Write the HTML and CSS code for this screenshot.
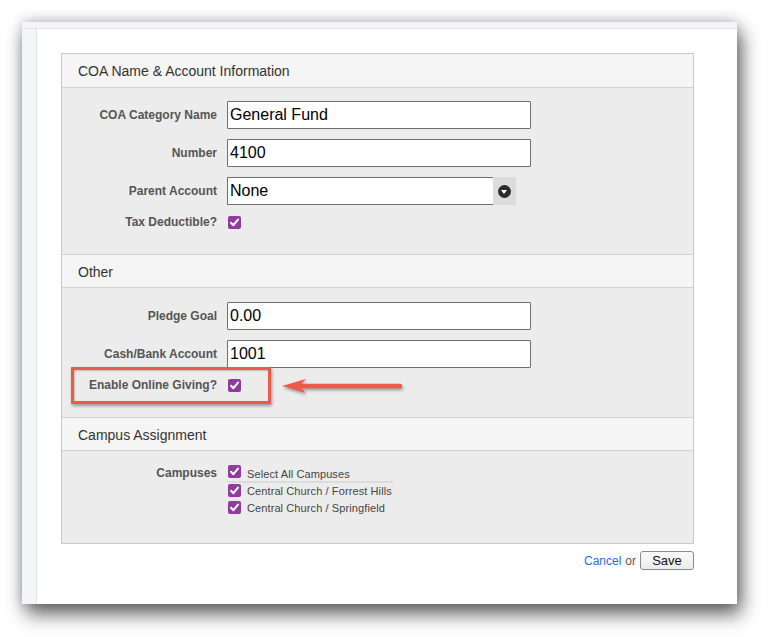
FILE: index.html
```html
<!DOCTYPE html>
<html lang="en">
<head>
    <meta charset="UTF-8">
    <title>COA Category</title>
    <link rel="stylesheet" href="styles.css">
</head>
<body>
    <div class="window">
        <div class="topbar"></div>
        <div class="frame">
            <div class="sidebar"></div>
            <div class="content">
                <form class="panel">
                    <div class="section">
                        <div class="section-head">COA Name &amp; Account Information</div>
                        <div class="section-body body-account">
                            <div class="row">
                                <label>COA Category Name</label>
                                <input type="text" value="General Fund">
                            </div>
                            <div class="row">
                                <label>Number</label>
                                <input type="text" value="4100">
                            </div>
                            <div class="row row-select">
                                <label>Parent Account</label>
                                <div class="select">
                                    <span class="select-value">None</span>
                                    <span class="select-btn"><span class="select-icon"></span></span>
                                </div>
                            </div>
                            <div class="row row-check">
                                <label>Tax Deductible?</label>
                                <span class="check"></span>
                            </div>
                        </div>
                    </div>

                    <div class="section">
                        <div class="section-head">Other</div>
                        <div class="section-body body-other">
                            <div class="row">
                                <label>Pledge Goal</label>
                                <input type="text" value="0.00">
                            </div>
                            <div class="row">
                                <label>Cash/Bank Account</label>
                                <input type="text" value="1001">
                            </div>
                            <div class="row row-check">
                                <label>Enable Online Giving?</label>
                                <span class="check"></span>
                            </div>
                        </div>
                    </div>

                    <div class="section">
                        <div class="section-head">Campus Assignment</div>
                        <div class="section-body body-campus">
                            <div class="row row-top">
                                <label>Campuses</label>
                                <ul class="campus-list">
                                    <li class="campus-all"><span class="check"></span><span>Select All Campuses</span></li>
                                    <li><span class="check"></span><span>Central Church / Forrest Hills</span></li>
                                    <li><span class="check"></span><span>Central Church / Springfield</span></li>
                                </ul>
                            </div>
                        </div>
                    </div>

                    <!-- annotation over the form -->
                    <div class="callout-box"></div>
                    <svg class="callout-arrow" width="126" height="18" viewBox="0 0 126 18">
                        <line x1="18" y1="8" x2="120" y2="8" stroke="#f0584a" stroke-width="4.5" stroke-linecap="round"/>
                        <path d="M2 8 L26 1 L19 8 L26 15 Z" fill="#f0584a"/>
                    </svg>
                </form>

                <div class="actions">
                    <a href="#" class="cancel">Cancel</a>
                    <span class="or">or</span>
                    <button type="button" class="btn-save">Save</button>
                </div>
            </div>
        </div>
    </div>
</body>
</html>
```

FILE: styles.css
```css
* {
    margin: 0;
    padding: 0;
    box-sizing: border-box;
}

html, body {
    min-height: 100%;
}

body {
    font-family: 'Liberation Sans', Arial, sans-serif;
    background-color: #fff;
    color: #333;
    padding: 22px 0 33px 22px;
}

.window {
    width: 715px;
    height: 582px;
    background-color: #fff;
    box-shadow: 0 -2px 12px rgba(0,0,0,0.18), 4px 10px 18px rgba(0,0,0,0.62);
    display: flex;
    flex-direction: column;
}

.topbar {
    height: 7px;
    background-color: #f3f4f9;
    border-bottom: 1px solid #e6e7ee;
}

.frame {
    flex: 1;
    display: flex;
}

.sidebar {
    width: 15px;
    background-color: #f3f5f9;
    border-right: 1px solid #e0e2e8;
}

.content {
    padding: 24px 0 0 24px;
}

.panel {
    position: relative;
    width: 633px;
    border: 1px solid #c9c9c9;
    background-color: #ececec;
}

.section + .section .section-head {
    border-top: 1px solid #d3d3d3;
}

.section-head {
    height: 34px;
    line-height: 34px;
    padding-left: 16px;
    font-size: 14px;
    color: #333;
    background-color: #f5f5f5;
    border-bottom: 1px solid #d3d3d3;
}

.section-body {
    padding: 13px 0 25px;
}

.body-other {
    padding: 14px 0 25px;
}

.body-campus {
    padding: 14px 0 25px;
}

.row {
    display: grid;
    grid-template-columns: 155px 304px;
    column-gap: 10px;
    align-items: center;
    margin-bottom: 10px;
}

.row-select {
    margin-top: 1px;
}

.row:last-child {
    margin-bottom: 0;
}

.row-top {
    align-items: start;
}

label {
    text-align: right;
    font-size: 12px;
    font-weight: bold;
    color: #555;
}

.row-top label {
    margin-top: 1px;
}

input[type="text"] {
    height: 28px;
    border: 1px solid #6f6f6f;
    border-radius: 1px;
    background-color: #fff;
    padding: 0 2px;
    font-family: 'Liberation Sans', Arial, sans-serif;
    font-size: 16px;
    color: #000;
}

.select {
    display: flex;
    height: 28px;
}

.select-value {
    width: 266px;
    border: 1px solid #6f6f6f;
    border-right: none;
    background-color: #fff;
    padding-left: 2px;
    font-size: 16px;
    line-height: 26px;
    color: #000;
}

.select-btn {
    width: 23px;
    background-color: #dcdcdc;
    display: flex;
    align-items: center;
    justify-content: center;
}

.select-icon {
    width: 13px;
    height: 13px;
    border-radius: 50%;
    background-color: #2c2c2c;
    position: relative;
}

.select-icon::after {
    content: '';
    position: absolute;
    left: 3px;
    top: 5px;
    border-left: 3.5px solid transparent;
    border-right: 3.5px solid transparent;
    border-top: 4px solid #fff;
}

.check {
    display: inline-block;
    flex-shrink: 0;
    width: 13px;
    height: 13px;
    border-radius: 2px;
    background-color: #913a9f;
    background-image: url("data:image/svg+xml,%3Csvg xmlns='http://www.w3.org/2000/svg' viewBox='0 0 13 13'%3E%3Cpath d='M3 6.8 L5.4 9.2 L10 3.6' fill='none' stroke='%23fff' stroke-width='2' stroke-linecap='round' stroke-linejoin='round'/%3E%3C/svg%3E");
    margin-left: 1px;
}

.row-check {
    height: 14px;
}

.campus-list {
    list-style: none;
    font-size: 11px;
    letter-spacing: 0.1px;
    color: #444;
}

.campus-list li {
    display: flex;
    align-items: center;
    gap: 6px;
    height: 13px;
    margin-bottom: 4px;
}

.campus-list li.campus-all {
    width: 166px;
    height: 18px;
    align-items: flex-start;
    border-bottom: 2px solid #dcdcdc;
    margin-bottom: 1px;
}

.campus-all span:last-child {
    margin-top: 3px;
}

.callout-box {
    position: absolute;
    left: 9px;
    top: 313px;
    width: 200px;
    height: 37px;
    border: 3px solid #f0584a;
    box-shadow: 1px 2px 3px rgba(0,0,0,0.35), inset 1px 1px 2px rgba(0,0,0,0.2);
}

.callout-arrow {
    position: absolute;
    left: 218px;
    top: 324px;
    filter: drop-shadow(1px 2px 1.5px rgba(0,0,0,0.35));
}

.actions {
    width: 633px;
    display: flex;
    justify-content: flex-end;
    align-items: center;
    gap: 4px;
    margin-top: 7px;
    font-size: 12px;
}

.cancel {
    color: #1b6fe0;
    text-decoration: none;
}

.or {
    color: #555;
}

.btn-save {
    height: 19px;
    width: 54px;
    border: 1px solid #8a8a8a;
    border-radius: 3px;
    background: linear-gradient(#fafafa, #ececec);
    font-family: 'Liberation Sans', Arial, sans-serif;
    font-size: 13px;
    color: #111;
}
```
